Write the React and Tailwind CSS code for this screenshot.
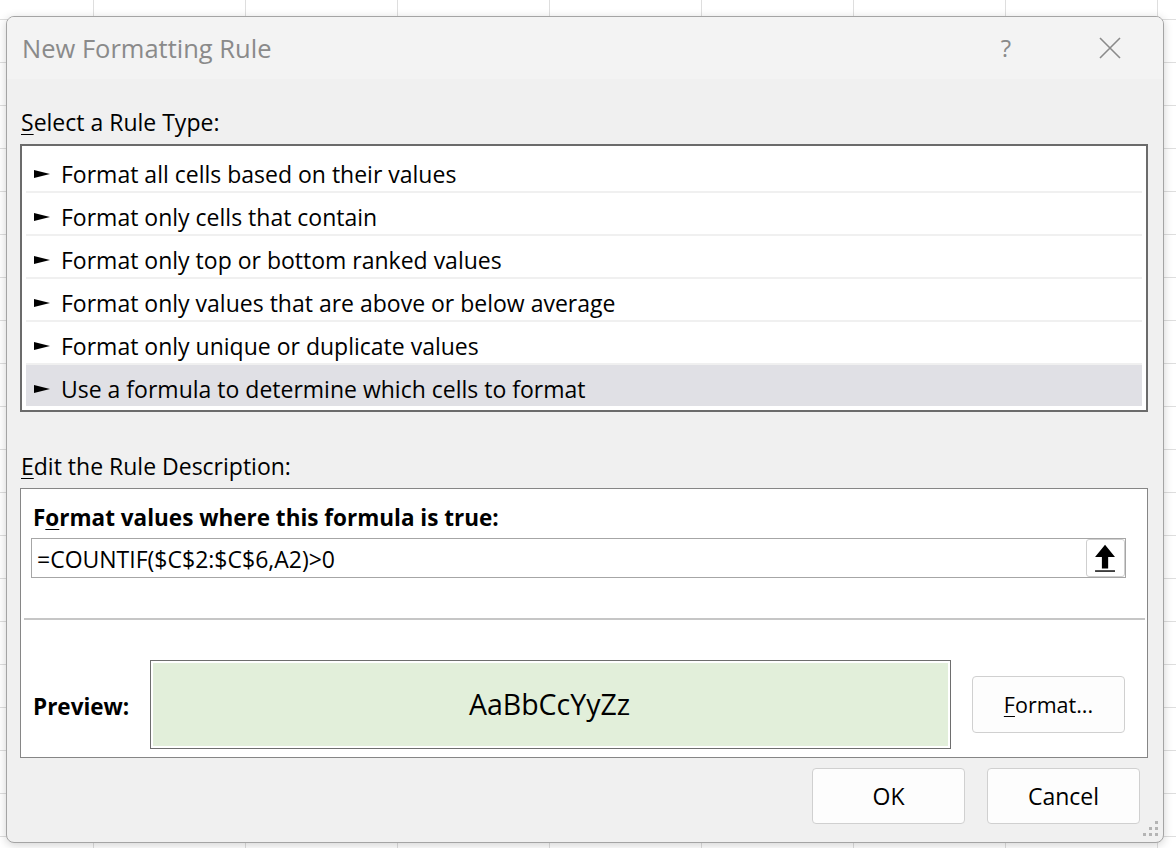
import React from "react";

const items = [
  "Format all cells based on their values",
  "Format only cells that contain",
  "Format only top or bottom ranked values",
  "Format only values that are above or below average",
  "Format only unique or duplicate values",
  "Use a formula to determine which cells to format",
];

function Tri() {
  return (
    <svg width="16" height="8" viewBox="0 0 16 8" className="shrink-0">
      <polygon points="0,0 16,4 0,8" fill="#000" />
    </svg>
  );
}

export default function App() {
  return (
    <div className="relative w-[1176px] h-[848px] overflow-hidden bg-white bg-[linear-gradient(to_right,#dedede_1px,transparent_1px),linear-gradient(to_bottom,#dedede_1px,transparent_1px)] bg-size-[152px_43px] bg-position-[93px_19px] font-['Open_Sans',sans-serif] text-black">
      <div className="pt-[16px] pl-[6px]">
        <div className="relative w-[1158px] h-[827px] rounded-[8px] border border-[#a4a4a4] bg-[#f0f0f0] shadow-[0_2px_10px_rgba(0,0,0,0.18)] overflow-hidden flex flex-col">
          {/* Title bar */}
          <div className="h-[62px] bg-[#f3f3f3] flex items-center pl-[15px] pr-[42px] shrink-0">
            <div className="text-[25.5px] leading-[30px] text-[#8a8a8a] pb-[1px]">New Formatting Rule</div>
            <div className="flex-1" />
            <div className="text-[24px] leading-[30px] text-[#8a8a8a] mr-[88px]">?</div>
            <svg width="22" height="22" viewBox="0 0 22 22">
              <path d="M1 1 L21 21 M21 1 L1 21" stroke="#8a8a8a" strokeWidth="1.6" fill="none" />
            </svg>
          </div>

          {/* Body */}
          <div className="flex flex-col pl-[13px] pr-[15px]">
            <div className="mt-[31px] h-[24px] leading-[24px] text-[23px] pl-[1px]">
              <span className="underline underline-offset-[3px] decoration-1">S</span>elect a Rule Type:
            </div>

            <div className="mt-[10px] h-[268px] border-2 border-[#6b6b6b] bg-white p-[4px] flex flex-col">
              {items.map((t, i) => (
                <div
                  key={t}
                  className={
                    i === items.length - 1
                      ? "h-[41px] bg-[#e0e0e5] flex items-center pl-[8px] gap-[11px] text-[23px] pt-[6px]"
                      : "h-[43px] border-b-2 border-[#f0f0f0] flex items-center pl-[8px] gap-[11px] text-[23px] pt-[6px]"
                  }
                >
                  <Tri />
                  <span className="leading-[26px]">{t}</span>
                </div>
              ))}
            </div>

            <div className="mt-[42px] h-[24px] leading-[24px] text-[23px] pl-[1px]">
              <span className="underline underline-offset-[3px] decoration-1">E</span>dit the Rule Description:
            </div>

            <div className="mt-[10px] h-[270px] border border-[#868686] bg-white flex flex-col">
              <div className="mt-[17px] ml-[12px] h-[24px] leading-[24px] text-[22.5px] font-bold">
                F<span className="underline underline-offset-[3px] decoration-1">o</span>rmat values where this formula is true:
              </div>
              <div className="mt-[8px] ml-[10px] mr-[21px] h-[40px] border border-[#a6a6a6] flex items-center">
                <div className="flex-1 pl-[5px] text-[23px] leading-[26px] pt-[1px]">=COUNTIF($C$2:$C$6,A2)&gt;0</div>
                <div className="w-[39px] h-[38px] border border-[#cfcfcf] rounded-[3px] bg-white flex items-center justify-center">
                  <svg width="39" height="38" viewBox="0 0 39 38">
                    <polygon points="19,5 29.5,18 22.3,18 22.3,30 15.7,30 15.7,18 8.5,18" fill="#000" />
                    <rect x="8.5" y="32" width="21" height="1.5" fill="#000" />
                  </svg>
                </div>
              </div>
              <div className="mt-[40px] ml-[3px] mr-[2px] h-[2px] bg-[#c6c6c6]" />
              <div className="mt-[40px] flex items-center">
                <div className="w-[129px] pl-[12px] text-[22.5px] font-bold leading-[26px] pt-[4px]">Preview:</div>
                <div className="w-[801px] h-[89px] border border-[#6e6e6e] p-[2px] bg-white">
                  <div className="w-full h-full bg-[#e2efda] flex items-center justify-center">
                    <span className="text-[28.5px] leading-[34px] pr-[2px] pb-[1px]">AaBbCcYyZz</span>
                  </div>
                </div>
                <div className="ml-[21px] w-[153px] h-[57px] border border-[#d0d0d0] rounded-[4px] bg-[#fdfdfd] flex items-center justify-center text-[21.5px] pt-[1px]">
                  <span>
                    <span className="underline underline-offset-[3px] decoration-1">F</span>ormat...
                  </span>
                </div>
              </div>
            </div>

            <div className="mt-[10px] flex justify-end gap-[22px] pr-[8px]">
              <div className="w-[153px] h-[56px] border border-[#d0d0d0] rounded-[4px] bg-[#fdfdfd] flex items-center justify-center text-[23px] pt-[1px]">OK</div>
              <div className="w-[153px] h-[56px] border border-[#d0d0d0] rounded-[4px] bg-[#fdfdfd] flex items-center justify-center text-[23px] pt-[1px]">Cancel</div>
            </div>
          </div>

          {/* resize grip */}
          <svg className="absolute right-[4px] bottom-[5px]" width="17" height="17" viewBox="0 0 17 17">
            <rect x="13" y="1" width="3" height="3" fill="#b4b4b4" />
            <rect x="7" y="7" width="3" height="3" fill="#b4b4b4" />
            <rect x="13" y="7" width="3" height="3" fill="#b4b4b4" />
            <rect x="1" y="13" width="3" height="3" fill="#b4b4b4" />
            <rect x="7" y="13" width="3" height="3" fill="#b4b4b4" />
            <rect x="13" y="13" width="3" height="3" fill="#b4b4b4" />
          </svg>
        </div>
      </div>
    </div>
  );
}
